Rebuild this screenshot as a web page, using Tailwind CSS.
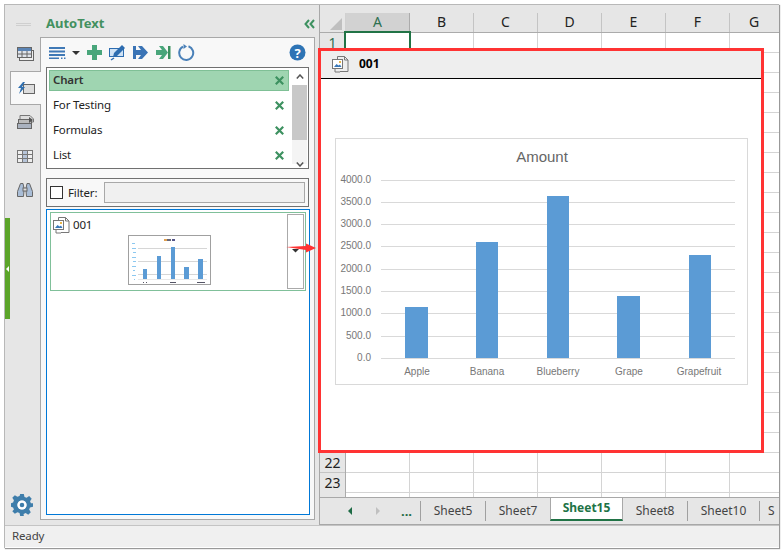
<!DOCTYPE html>
<html>
<head>
<meta charset="utf-8">
<script src="https://cdn.jsdelivr.net/npm/@tailwindcss/browser@4"></script>
</head>
<body class="bg-white">
<div class="relative w-[783px] h-[553px] overflow-hidden bg-white font-['Noto_Sans',sans-serif] text-[11.5px] tracking-[-0.15px] text-[#222]">
  <!-- window -->
  <div class="ml-[4px] mt-[4px] w-[775px] h-[544px] flex flex-col border-t border-l border-[#b8b8b8] shadow-[1px_1px_1px_#999]">
    <div class="h-[520px] flex bg-[#e6e6e6]">
      <!-- left pane -->
      <div class="w-[314px] flex flex-col shrink-0">
        <div class="h-[32px] pt-[6px] flex items-center shrink-0">
          <div class="w-[41px] pl-[11px] shrink-0">
            <div class="w-[15px] h-[3px] border-y border-[#cfcfcf]"></div>
          </div>
          <div class="flex-1 font-bold text-[13px] tracking-normal text-[#43915f]">AutoText</div>
          <svg class="mr-[4px]" width="11" height="10" viewBox="0 0 11 10" fill="none" stroke="#3d9160" stroke-width="2"><path d="M5 1 1.500 5 5 9M10 1 6.500 5 10 9"/></svg>
        </div>
        <div class="flex h-[483px]">
          <!-- sidebar -->
          <div class="relative w-[35px] shrink-0 flex flex-col items-end">
            <div class="absolute left-0 top-[181px] w-[5px] h-[101px] bg-[#5ca52a] flex items-center justify-center">
              <div class="w-0 h-0 border-y-[3px] border-y-transparent border-r-[3px] border-r-white"></div>
            </div>
            <div class="h-[34px] w-full flex items-center justify-center pl-[5px]">
              <svg width="17" height="14" viewBox="0 0 17 14"><rect x="2.500" y="3.500" width="14" height="10" fill="#eee" stroke="#666"/><rect x="0.500" y="0.500" width="14" height="10" fill="#dfe3ea" stroke="#666"/><rect x="1" y="1" width="13" height="3" fill="#5b84b5"/><path d="M5 4v6M10 4v6M1 7h13" stroke="#666"/></svg>
            </div>
            <div class="relative z-10 w-[31px] h-[34px] -mr-px bg-[#f8f8f8] border border-r-0 border-[#a8a8a8] flex items-center justify-center">
              <svg width="18" height="13" viewBox="0 0 18 13"><rect x="6.500" y="2.500" width="11" height="9" fill="#ddd" stroke="#666"/><path d="M6 0 1 6h3L2 12l6-7H5l3-5z" fill="#2f6fb0"/></svg>
            </div>
            <div class="h-[34px] w-full flex items-center justify-center pl-[5px]">
              <svg width="17" height="14" viewBox="0 0 17 14"><path d="M3 .5h10l3.500 3.500v3H3z" fill="#ddd" stroke="#777"/><rect x="1.500" y="4.500" width="13" height="4" fill="#bbb" stroke="#666"/><rect x="0.500" y="8.500" width="14" height="5" fill="#aab2bf" stroke="#666"/><path d="M12 2l4 3-4 3z" fill="#555"/></svg>
            </div>
            <div class="h-[34px] w-full flex items-center justify-center pl-[5px]">
              <svg width="16" height="13" viewBox="0 0 16 13"><rect x="0.500" y="0.500" width="15" height="12" fill="#eee" stroke="#777"/><rect x="5" y="1" width="6" height="11" fill="#b6c4d8"/><path d="M5.500 1v11M10.500 1v11M1 4.500h14M1 8.500h14" stroke="#777"/></svg>
            </div>
            <div class="h-[34px] w-full flex items-center justify-center pl-[5px]">
              <svg width="16" height="14" viewBox="0 0 16 14" stroke="#666"><path d="M3.500.5h2.500l1 5v2l-.5 6H.5v-5zM12.500.5H10l-1 5v2l.5 6h6v-5z" fill="#a9bdd6"/><rect x="6" y="5" width="4" height="3" fill="#ddd"/></svg>
            </div>
            <div class="flex-1"></div>
            <div class="w-full h-[28px] pt-[2px] pr-[2px] flex justify-center">
              <svg width="22" height="22" viewBox="0 0 24 24"><path fill="#3f7eab" fill-rule="evenodd" d="M10 0h4l.7 3.200 2.300.9 2.800-1.800 2.800 2.800-1.800 2.800.9 2.300L24 10v4l-3.300.8-.9 2.200 1.800 2.800-2.800 2.800-2.800-1.800-2.300.9L14 24h-4l-.7-3.300-2.300-.9-2.800 1.800-2.800-2.800L3.200 17l-.9-2.200L0 14v-4l2.300-.8.900-2.300L1.400 4.100l2.800-2.800L7 3.100l2.300-.9zM12 7a5 5 0 1 0 0 10 5 5 0 0 0 0-10z"/><circle cx="12" cy="12" r="5" fill="#fff"/><circle cx="12" cy="12" r="2.500" fill="#3f7eab"/></svg>
            </div>
          </div>
          <!-- panel -->
          <div class="w-[275px] h-[483px] bg-[#f8f8f8] border border-[#a8a8a8] px-[5px] flex flex-col">
            <!-- toolbar -->
            <div class="h-[29px] flex items-center shrink-0 pl-[3px] pr-[3px]">
              <svg class="mr-[6px]" width="17" height="12" viewBox="0 0 17 12" fill="#4079b6"><rect width="16" height="2"/><rect y="3.500" width="16" height="2"/><rect y="7" width="16" height="2"/><rect y="10.500" width="10" height="1.500"/><rect x="12" y="10.500" width="1.500" height="1.500"/><rect x="15" y="10.500" width="1.500" height="1.500"/></svg>
              <div class="mr-[7px] w-0 h-0 border-x-[4px] border-x-transparent border-t-[4px] border-t-[#333]"></div>
              <svg class="mr-[7px]" width="15" height="15" viewBox="0 0 15 15" fill="#49a67b"><path d="M5 0h5v5h5v5h-5v5H5v-5H0V5h5z"/></svg>
              <svg class="mr-[7px]" width="17" height="17" viewBox="0 0 17 17"><rect x="0.500" y="4.500" width="14" height="8" fill="#cfe2f5" stroke="#2d6cb0"/><path d="M4 13l1-4 8-8 3 3-8 8z" fill="#2d6cb0"/><path d="M2 16l3-2" stroke="#2d6cb0" stroke-width="1.500"/></svg>
              <svg class="mr-[8px]" width="15" height="13" viewBox="0 0 15 13" fill="#3a73b5"><path d="M0 0h3v4h5L5 0h4l6 6.500L9 13H5l3-4H3v4H0z"/></svg>
              <svg class="mr-[7px]" width="15" height="13" viewBox="0 0 15 13" fill="#49a67b"><path d="M0 4h6L3 0h4l5 6.500L7 13H3l3-4H0z"/><rect x="12" width="2.500" height="13" fill="#3d9160"/></svg>
              <svg width="17" height="17" viewBox="0 0 17 17" fill="none" stroke="#4a80b8" stroke-width="2"><path d="M10.500 2.300A7 7 0 1 1 5 2.700"/><path d="M5.500 0 9 2.600 5.500 5z" fill="#4a80b8" stroke="none"/></svg>
              <div class="flex-1"></div>
              <svg width="17" height="17" viewBox="0 0 17 17"><circle cx="8.500" cy="8.500" r="8" fill="#2e74b5"/><text x="8.500" y="13.500" text-anchor="middle" font-size="13" font-weight="700" fill="#fff" font-family="Noto Sans">?</text></svg>
            </div>
            <!-- list -->
            <div class="relative h-[102px] bg-white border border-[#707070] shrink-0 pt-[2px] pl-[2px]">
              <div class="w-[240px] h-[21px] mb-[4px] bg-[#9fd5b1] border border-[#7fc096] pl-[3px] flex items-center justify-between pr-[4px]">
                <span class="pb-px font-semibold text-[#333]">Chart</span>
                <svg width="9" height="9" viewBox="0 0 9 9" stroke="#3d9160" stroke-width="2.200"><path d="M.8.8l7.400 7.400M8.200.8.800 8.200"/></svg>
              </div>
              <div class="w-[240px] h-[21px] mb-[4px] pl-[4px] pr-[5px] flex items-center justify-between">
                <span class="pb-px">For Testing</span>
                <svg width="9" height="9" viewBox="0 0 9 9" stroke="#3d9160" stroke-width="2.200"><path d="M.8.8l7.400 7.400M8.200.8.800 8.200"/></svg>
              </div>
              <div class="w-[240px] h-[21px] mb-[4px] pl-[4px] pr-[5px] flex items-center justify-between">
                <span class="pb-px">Formulas</span>
                <svg width="9" height="9" viewBox="0 0 9 9" stroke="#3d9160" stroke-width="2.200"><path d="M.8.8l7.400 7.400M8.200.8.800 8.200"/></svg>
              </div>
              <div class="w-[240px] h-[21px] pl-[4px] pr-[5px] flex items-center justify-between">
                <span class="pb-px">List</span>
                <svg width="9" height="9" viewBox="0 0 9 9" stroke="#3d9160" stroke-width="2.200"><path d="M.8.8l7.400 7.400M8.200.8.800 8.200"/></svg>
              </div>
              <!-- scrollbar -->
              <div class="absolute right-[1px] top-0 bottom-[4px] w-[15px] flex flex-col items-center bg-[#f4f4f4]">
                <div class="h-[17px] flex items-center bg-white w-full justify-center">
                  <svg width="8" height="5" viewBox="0 0 8 5" fill="none" stroke="#555" stroke-width="1.500"><path d="M.8 4.500 4 1l3.200 3.500"/></svg>
                </div>
                <div class="w-full h-[55px] bg-[#c8c8c8]"></div>
                <div class="flex-1"></div>
                <svg class="mb-[-3px]" width="8" height="5" viewBox="0 0 8 5" fill="none" stroke="#555" stroke-width="1.500"><path d="M.8.500 4 4l3.200-3.500"/></svg>
              </div>
            </div>
            <div class="h-[9px] shrink-0"></div>
            <!-- filter -->
            <div class="h-[29px] border border-[#707070] shrink-0 flex items-center pl-[3px] pr-[3px]">
              <div class="w-[13px] h-[13px] border border-[#333] bg-white mr-[5px] shrink-0"></div>
              <span class="w-[36px] shrink-0">Filter:</span>
              <div class="flex-1 h-[21px] bg-[#f0f0f0] border border-[#a8a8a8]"></div>
            </div>
            <div class="h-[2px] shrink-0"></div>
            <!-- items -->
            <div class="w-[264px] h-[306px] bg-white border border-[#0078d7] shrink-0 pt-[2px] pl-[3px]">
              <div class="w-[256px] h-[79px] border border-[#80c09a] flex relative">
                <div class="flex-1 relative">
                  <div class="flex items-center pl-[2px] pt-[3px]">
                    <svg width="17" height="17" viewBox="0 0 17 17" fill="none" stroke="#777"><path d="M5.500 3V.5h7l3.500 3.500v11.500H8"/><path d="M12.500.5V4H16"/><rect x="0.500" y="3.500" width="10" height="9" fill="#fff"/><path d="M2 11l2.500-3 2 1.500 1.500-1 1.500 2.500z" fill="#3a78b8" stroke="none"/><rect x="7" y="5" width="2" height="2" fill="#e8b54a" stroke="none"/><path d="M3 12.500v3.500h5"/></svg>
                    <span class="ml-[3px] pb-px">001</span>
                  </div>
                  <div class="absolute left-[77px] top-[22px] w-[83px] h-[50px] border border-[#a0a0a0] bg-white">
                    <svg class="block" width="81" height="48" viewBox="129 236 81 48">
                      <path d="M138 248.500h69M138 261.500h69M138 274.500h69" stroke="#d6d6d6"/>
                      <path d="M138 279.500h69" stroke="#e8e8e8"/>
                      <g fill="#5b9bd5"><rect x="143" y="269" width="4" height="10"/><rect x="157" y="256" width="4" height="23"/><rect x="171" y="247" width="4" height="32"/><rect x="184" y="267" width="5" height="12"/><rect x="198" y="259" width="5" height="20"/></g>
                      <rect x="164" y="239" width="3" height="2" fill="#e0a050"/><rect x="167" y="239" width="4" height="2" fill="#667"/><rect x="172" y="239" width="3" height="2" fill="#558"/>
                      <g fill="#8cc8f0"><rect x="132" y="243" width="3" height="1"/><rect x="132" y="248" width="4" height="1"/><rect x="133" y="252" width="3" height="1"/><rect x="132" y="257" width="4" height="1"/><rect x="133" y="261" width="3" height="1"/><rect x="132" y="266" width="4" height="1"/><rect x="133" y="270" width="2" height="1"/><rect x="132" y="275" width="4" height="1"/><rect x="134" y="279" width="1" height="1"/></g>
                      <g fill="#556"><rect x="143" y="282" width="1" height="1"/><rect x="146" y="282" width="1" height="1"/><rect x="170" y="282" width="6" height="1"/><rect x="197" y="282" width="8" height="1"/></g>
                    </svg>
                  </div>
                </div>
                <div class="w-[17px] h-[75px] mt-[1px] mr-[1px] border border-[#aaa] bg-white"></div>
              </div>
            </div>
          </div>
        </div>
      </div>
      <!-- sheet area -->
      <div class="flex-1 pt-[8px] flex flex-col border-l border-[#a8a8a8] min-w-0 tracking-normal">
        <!-- column headers -->
        <div class="h-[20px] flex shrink-0 border-b border-[#ababab] text-[14px] text-[#222] leading-[18px] text-center">
          <div class="w-[26px] shrink-0 relative border-r border-[#d0d0d0]">
            <div class="absolute right-[3px] bottom-[2px] w-0 h-0 border-l-[12px] border-l-transparent border-b-[12px] border-b-[#bfbfbf]"></div>
          </div>
          <div class="w-[64px] shrink-0 bg-[#d2d2d2] border-r border-[#ababab] text-[#2d7050]">A</div>
          <div class="w-[64px] shrink-0 border-r border-[#c4c4c4]">B</div>
          <div class="w-[64px] shrink-0 border-r border-[#c4c4c4]">C</div>
          <div class="w-[64px] shrink-0 border-r border-[#c4c4c4]">D</div>
          <div class="w-[64px] shrink-0 border-r border-[#c4c4c4]">E</div>
          <div class="w-[64px] shrink-0 border-r border-[#c4c4c4]">F</div>
          <div class="w-[49px] shrink-0 pr-[1px]">G</div>
        </div>
        <!-- rows -->
        <div class="h-[464px] flex shrink-0">
          <div class="w-[26px] shrink-0 bg-[#e6e6e6] flex flex-col text-[14px] text-center leading-[20px] border-r border-[#ababab]">
            <div class="h-[20px] shrink-0 text-[#2d7050]">1</div>
            <div class="h-[399px] shrink-0"></div>
            <div class="h-[20px] shrink-0 border-t border-[#c4c4c4] leading-[19px]">22</div>
            <div class="h-[20px] shrink-0 border-t border-[#c4c4c4] leading-[19px]">23</div>
          </div>
          <div class="relative flex-1 bg-white bg-[linear-gradient(to_bottom,transparent_19px,#d4d4d4_19px),linear-gradient(to_right,transparent_63px,#d4d4d4_63px)] bg-[size:64px_20px]">
            <div class="absolute left-[-2px] top-[-2px] w-[67px] h-[22px] border-2 border-[#217346]"></div>
          </div>
        </div>
        <!-- tabs -->
        <div class="h-[28px] flex shrink-0 bg-[#e6e6e6] border-t border-b border-[#a8a8a8] text-[12px] text-[#444] overflow-hidden">
          <div class="w-[100px] shrink-0 relative flex items-center">
            <div class="ml-[28px] w-0 h-0 border-y-[4px] border-y-transparent border-r-[4px] border-r-[#1e6b45]"></div>
            <div class="ml-[24px] w-0 h-0 border-y-[4px] border-y-transparent border-l-[4px] border-l-[#c0c0c0]"></div>
            <div class="ml-[21px] font-bold text-[13px] text-[#1e6b45] leading-none">...</div>
          </div>
          <div class="w-[65px] shrink-0 flex items-center justify-center my-[3px] border-l border-[#a0a0a0]">Sheet5</div>
          <div class="w-[65px] shrink-0 flex items-center justify-center my-[3px] border-l border-[#a0a0a0]">Sheet7</div>
          <div class="w-[73px] shrink-0 flex items-center justify-center bg-white border-x border-[#a8a8a8] border-b-2 border-b-[#217346] font-bold text-[#217346] mb-[3px] -mt-px">Sheet15</div>
          <div class="w-[64px] shrink-0 flex items-center justify-center my-[3px]">Sheet8</div>
          <div class="w-[72px] shrink-0 flex items-center justify-center my-[3px] border-l border-[#a0a0a0]">Sheet10</div>
          <div class="w-[20px] shrink-0 flex items-center pl-[8px] my-[3px] border-l border-[#a0a0a0]">S</div>
        </div>
      </div>
    </div>
    <!-- status bar -->
    <div class="h-[22px] bg-[#f0f0f0] border-t border-[#c4c4c4] pl-[7px] pb-px flex items-center text-[#444] shrink-0">Ready</div>
  </div>

  <!-- popup over the sheet -->
  <div class="absolute left-[318px] top-[48px] w-[446px] h-[405px] border-[3px] border-[#ff3333] bg-white tracking-normal text-[12px]">
    <div class="h-[28px] bg-[#eeeeee] border-b border-black flex items-center pl-[11px] font-bold text-black">
      <svg width="17" height="17" viewBox="0 0 17 17" fill="none" stroke="#777"><path d="M5.500 3V.5h7l3.500 3.500v11.500H8"/><path d="M12.500.5V4H16"/><rect x="0.500" y="3.500" width="10" height="9" fill="#fff"/><path d="M2 11l2.500-3 2 1.500 1.500-1 1.500 2.500z" fill="#3a78b8" stroke="none"/><rect x="7" y="5" width="2" height="2" fill="#e8b54a" stroke="none"/><path d="M3 12.500v3.500h5"/></svg>
      <span class="ml-[10px] pb-px">001</span>
    </div>
    <div class="pl-[14px] pt-[59px]">
      <svg class="block" width="413" height="247" viewBox="335 138 413 247" font-family="Liberation Sans" fill="#777">
        <rect x="335.500" y="138.500" width="412" height="246" fill="#fff" stroke="#d9d9d9"/>
        <text x="542" y="162" font-size="15" text-anchor="middle" fill="#666">Amount</text>
        <path d="M381 180.500h354M381 202.500h354M381 224.500h354M381 246.500h354M381 269.500h354M381 291.500h354M381 313.500h354M381 336.500h354M381 358.500h354" stroke="#d9d9d9"/>
        <g fill="#5b9bd5">
          <rect x="405" y="307" width="23" height="51"/>
          <rect x="476" y="242" width="22" height="116"/>
          <rect x="547" y="196" width="22" height="162"/>
          <rect x="617" y="296" width="23" height="62"/>
          <rect x="689" y="255" width="22" height="103"/>
        </g>
        <g font-size="10" text-anchor="end">
          <text x="371" y="183">4000.0</text>
          <text x="371" y="205">3500.0</text>
          <text x="371" y="227">3000.0</text>
          <text x="371" y="249">2500.0</text>
          <text x="371" y="272">2000.0</text>
          <text x="371" y="294">1500.0</text>
          <text x="371" y="316">1000.0</text>
          <text x="371" y="339">500.0</text>
          <text x="371" y="361">0.0</text>
        </g>
        <g font-size="10" text-anchor="middle">
          <text x="417" y="375">Apple</text>
          <text x="487" y="375">Banana</text>
          <text x="558" y="375">Blueberry</text>
          <text x="629" y="375">Grape</text>
          <text x="699" y="375">Grapefruit</text>
        </g>
      </svg>
    </div>
  </div>

  <!-- connector arrow -->
  <svg class="absolute left-[286px] top-[242px]" width="31" height="12" viewBox="0 0 31 12">
    <path d="M6 7h7l-3.500 3.500z" fill="#333"/>
    <path d="M0 5 20 4V1.500L30 6 20 10.500V8z" fill="#ff3333"/>
  </svg>
</div>
</body>
</html>
